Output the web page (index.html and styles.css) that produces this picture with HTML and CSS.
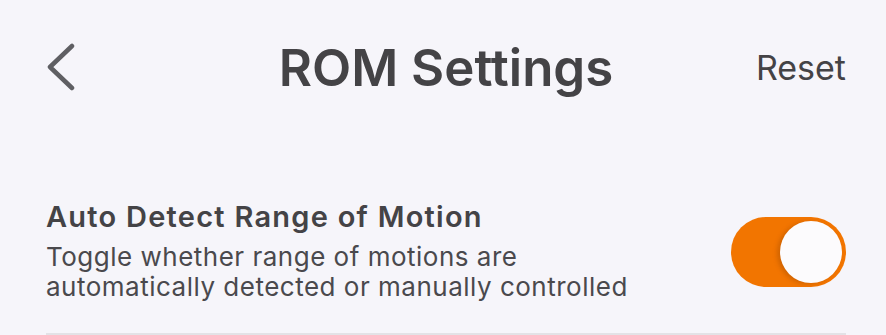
FILE: index.html
```html
<!DOCTYPE html>
<html lang="en">
<head>
    <meta charset="UTF-8">
    <meta name="viewport" content="width=device-width, initial-scale=1.0">
    <title>ROM Settings</title>
    <link rel="stylesheet" href="styles.css">
</head>
<body>

  <header class="nav">
    <button class="nav__back" aria-label="Back">
      <svg width="30" height="48" viewBox="0 0 30 48">
        <path d="M26 3 L4 24 L26 45" fill="none" stroke="#5f5f63" stroke-width="4.5" stroke-linecap="round" stroke-linejoin="round"/>
      </svg>
    </button>
    <h1 class="nav__title">ROM Settings</h1>
    <button class="nav__action">Reset</button>
  </header>

  <section class="setting">
    <div class="setting__text">
      <h2 class="setting__title">Auto Detect Range of Motion</h2>
      <p class="setting__desc">Toggle whether range of motions are<br>automatically detected or manually controlled</p>
    </div>
    <div class="switch switch--on">
      <span class="switch__knob"></span>
    </div>
  </section>

</body>
</html>
```

FILE: styles.css
```css
*,
*::before,
*::after {
  box-sizing: border-box;
}

body {
  margin: 0;
  padding: 0 40px 0 46px;
  background: #f6f5fa;
  color: #444346;
  font-family: Inter, "Noto Sans", sans-serif;
  height: 335px;
  overflow: hidden;
}

.nav {
  display: grid;
  grid-template-columns: 1fr auto 1fr;
  align-items: center;
  height: 134px;
}

.nav__back {
  justify-self: start;
  background: none;
  border: 0;
  padding: 0;
  display: flex;
  cursor: pointer;
}

.nav__title {
  margin: 0;
  font-size: 51px;
  font-weight: 600;
  color: #444346;
}

.nav__action {
  justify-self: end;
  background: none;
  border: 0;
  padding: 0;
  font-family: inherit;
  font-size: 34px;
  color: #444346;
  cursor: pointer;
}

.setting {
  display: flex;
  align-items: flex-start;
  justify-content: space-between;
  padding: 66px 0 31px;
  border-bottom: 2px solid #e3e2e6;
}

.setting__title {
  margin: 0 0 8px;
  font-size: 29px;
  line-height: 34px;
  font-weight: 600;
  letter-spacing: 1.25px;
  color: #444346;
}

.setting__desc {
  margin: 0;
  font-size: 26px;
  line-height: 30px;
  letter-spacing: 0.5px;
  color: #4a494d;
}

.switch {
  width: 115px;
  height: 70px;
  border-radius: 35px;
  background: #f27500;
  padding: 4px;
  display: flex;
  justify-content: flex-end;
  margin-top: 17px;
}

.switch__knob {
  width: 62px;
  height: 62px;
  border-radius: 50%;
  background: #fcfbfd;
  box-shadow: -3px 1px 4px rgba(150, 70, 0, 0.35);
}
```
